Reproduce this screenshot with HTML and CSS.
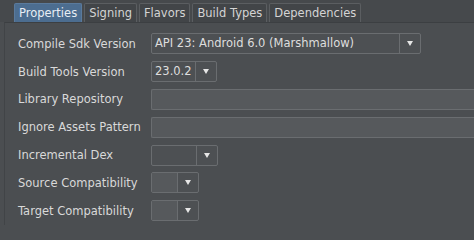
FILE: index.html
```html
<!DOCTYPE html>
<html>
<head>
<meta charset="utf-8">
<link rel="stylesheet" href="styles.css">
</head>
<body>
<div class="tabs">
  <div class="tab active">Properties</div>
  <div class="tab">Signing</div>
  <div class="tab">Flavors</div>
  <div class="tab">Build Types</div>
  <div class="tab">Dependencies</div>
</div>
<div class="panel">
  <div class="label">Compile Sdk Version</div>
  <div class="combo w-sdk"><span class="val">API 23: Android 6.0 (Marshmallow)</span><span class="arrow"></span></div>

  <div class="label">Build Tools Version</div>
  <div class="combo w-bt"><span class="val">23.0.2</span><span class="arrow"></span></div>

  <div class="label">Library Repository</div>
  <div class="text"></div>

  <div class="label">Ignore Assets Pattern</div>
  <div class="text"></div>

  <div class="label">Incremental Dex</div>
  <div class="combo w-dex"><span class="val"></span><span class="arrow"></span></div>

  <div class="label">Source Compatibility</div>
  <div class="combo w-compat"><span class="val light"></span><span class="arrow"></span></div>

  <div class="label">Target Compatibility</div>
  <div class="combo w-compat"><span class="val light"></span><span class="arrow"></span></div>
</div>
</body>
</html>
```
FILE: styles.css
```css
html, body {
  margin: 0;
  padding: 0;
  width: 474px;
  height: 240px;
  overflow: hidden;
  background: #4b4e51;
  font-family: "DejaVu Sans", sans-serif;
  font-size: 11.5px;
  color: #d9d9d9;
}
.tabs {
  display: flex;
  gap: 2px;
  padding: 3px 0 0 14px;
  height: 19px;
  background: #46494c;
}
.tab {
  height: 18px;
  line-height: 18px;
  padding: 0 4px;
  border: 1px solid #5b5e61;
  border-bottom: none;
  border-radius: 2px 2px 0 0;
  background: #424548;
  color: #d4d4d4;
}
.tab.active {
  background: #4c6d90;
  border-color: #5a7a9c;
  color: #e8eef4;
}
.panel {
  margin-left: 4px;
  border-top: 1px solid #3c3f42;
  border-left: 1px solid #414447;
  display: grid;
  grid-template-columns: 133px 1fr;
  grid-auto-rows: 27.8px;
  align-items: center;
  padding: 7px 0 0 13px;
}
.label {
  white-space: nowrap;
}
.combo, .text {
  height: 19px;
  border: 1px solid #6a6d70;
  border-radius: 2px;
  box-sizing: content-box;
}
.combo {
  display: flex;
  background: #4d5053;
}
.combo .val {
  flex: 1;
  line-height: 19px;
  padding-left: 3px;
  border-right: 1px solid #6a6d70;
  white-space: nowrap;
  overflow: hidden;
  color: #dedede;
}
.combo .val.light {
  background: #56595c;
}
.combo .arrow {
  width: 20px;
  position: relative;
}
.combo .arrow::after {
  content: "";
  position: absolute;
  left: 7px;
  top: 7px;
  border-left: 3.5px solid transparent;
  border-right: 3.5px solid transparent;
  border-top: 5px solid #e6e6e6;
}
.text {
  background: #56595c;
  border-right: none;
  border-radius: 2px 0 0 2px;
}
.w-sdk { width: 268px; }
.w-bt { width: 64px; }
.w-dex { width: 65px; }
.w-compat { width: 46px; }
```
